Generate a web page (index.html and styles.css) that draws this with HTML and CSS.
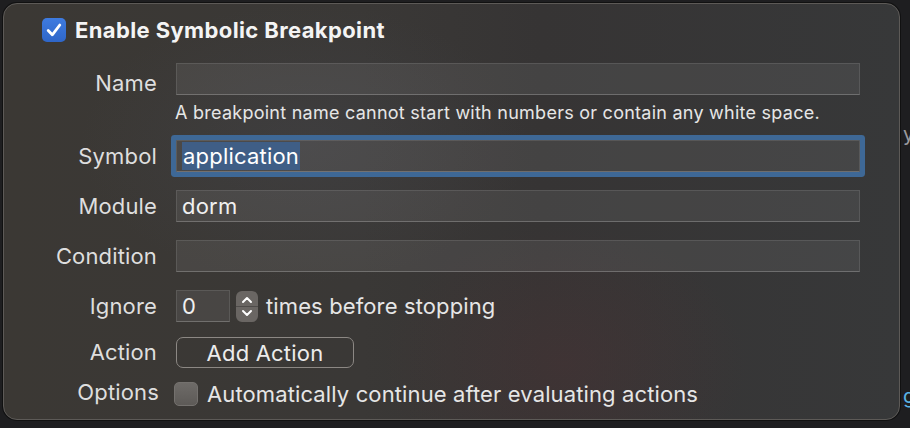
FILE: index.html
```html
<!DOCTYPE html>
<html>
<head>
<meta charset="utf-8">
<link rel="stylesheet" href="styles.css">
</head>
<body>
<div class="stage">
  <span class="frag frag-y">y</span>
  <span class="frag frag-g">g</span>
  <div class="panel">
    <div class="header">
      <span class="check on">
        <svg viewBox="0 0 24 24" width="24" height="24"><path d="M6.2 12.6 L10.3 16.8 L17.8 7" fill="none" stroke="#fff" stroke-width="2.8" stroke-linecap="round" stroke-linejoin="round"/></svg>
      </span>
      <span class="title">Enable Symbolic Breakpoint</span>
    </div>

    <div class="row r-name">
      <label class="lbl lbl-name">Name</label>
      <div class="field"></div>
    </div>
    <div class="row r-help">
      <span></span>
      <div class="help">A breakpoint name cannot start with numbers or contain any white space.</div>
    </div>
    <div class="row r-std">
      <label class="lbl">Symbol</label>
      <div class="field focus"><span class="sel">application</span></div>
    </div>
    <div class="row r-std">
      <label class="lbl">Module</label>
      <div class="field">dorm</div>
    </div>
    <div class="row r-std">
      <label class="lbl">Condition</label>
      <div class="field"></div>
    </div>
    <div class="row r-std">
      <label class="lbl">Ignore</label>
      <div class="ignore">
        <div class="field small">0</div>
        <div class="stepper">
          <svg viewBox="0 0 22 31" width="22" height="31">
            <path d="M7 11 L11 7 L15 11" fill="none" stroke="#fff" stroke-width="2" stroke-linecap="round" stroke-linejoin="round"/>
            <line x1="0" y1="15.5" x2="22" y2="15.5" stroke="rgba(0,0,0,0.25)" stroke-width="1"/>
            <path d="M7 20 L11 24 L15 20" fill="none" stroke="#fff" stroke-width="2" stroke-linecap="round" stroke-linejoin="round"/>
          </svg>
        </div>
        <span class="ctext">times before stopping</span>
      </div>
    </div>
    <div class="row r-action">
      <label class="lbl">Action</label>
      <div><button class="btn">Add Action</button></div>
    </div>
    <div class="row r-opt">
      <label class="lbl opt">Options</label>
      <div class="optline">
        <span class="check off"></span>
        <span class="ctext">Automatically continue after evaluating actions</span>
      </div>
    </div>
  </div>
</div>
</body>
</html>
```

FILE: styles.css
```css
html, body {
  margin: 0;
  padding: 0;
}
body {
  background: #1e1e20;
  font-family: Inter, "Noto Sans", "Liberation Sans", sans-serif;
  color: #e2e2e2;
}
.stage {
  position: relative;
  width: 910px;
  height: 428px;
  overflow: hidden;
  padding: 3px 0 0 3px;
  box-sizing: border-box;
}
.frag {
  position: absolute;
  font-size: 20px;
  line-height: 1;
}
.frag-y { left: 903px; top: 124px; color: #9a9a9e; }
.frag-g { left: 903px; top: 386px; color: #5ab4e6; }

.panel {
  width: 897px;
  height: 417px;
  box-sizing: border-box;
  border: 1px solid #5d5a57;
  border-radius: 14px;
  box-shadow: 0 0 0 1px #111;
  background:
    radial-gradient(ellipse 260px 200px at 560px 360px, rgba(80, 50, 52, 0.35), transparent 70%),
    radial-gradient(ellipse 320px 200px at 300px 140px, rgba(70, 72, 80, 0.35), transparent 70%),
    linear-gradient(90deg, #3b3834 0%, #3a3836 40%, #363434 60%, #373839 100%);
  padding-top: 14px;
}

.header {
  display: flex;
  align-items: center;
  height: 24px;
  padding-left: 38px;
}
.check {
  width: 24px;
  height: 24px;
  border-radius: 5px;
  box-sizing: border-box;
  flex: none;
  display: flex;
}
.check.on {
  background: linear-gradient(#3e7be0, #2f66c8);
}
.check.off {
  background: linear-gradient(#6e6b68, #5d5a57);
  border: 1px solid #74716e;
}
.title {
  margin-left: 9px;
  font-size: 22px;
  font-weight: 700;
  color: #f4f4f4;
  letter-spacing: 0.38px;
}

.row {
  display: grid;
  grid-template-columns: 153px 684px;
  column-gap: 19px;
  align-items: center;
}
.r-name { margin-top: 20px; height: 32px; }
.r-help { margin-top: 8px; height: 20px; }
.r-std { margin-top: 18px; height: 32px; }
.r-action { margin-top: 14px; height: 32px; }
.r-opt { margin-top: 12px; height: 28px; }

.lbl {
  text-align: right;
  font-size: 22px;
  letter-spacing: 0.15px;
  color: #dedede;
}
.lbl-name {
  margin-top: 8px;
}
.lbl.opt {
  margin-right: -2px;
  margin-top: -4px;
}
.field {
  height: 32px;
  box-sizing: border-box;
  background: rgba(255, 255, 255, 0.075);
  border: 1px solid rgba(255, 255, 255, 0.1);
  border-bottom-color: rgba(255, 255, 255, 0.22);
  font-size: 22px;
  letter-spacing: 0.2px;
  color: #f0f0f0;
  padding-left: 5px;
  display: flex;
  align-items: center;
}
.field.focus {
  box-shadow: 0 0 0 5px #3e6896;
  border-radius: 1px;
}
.sel {
  background: #3f5e86;
  color: #ffffff;
  padding: 0 1px;
  line-height: 28px;
}
.help {
  font-size: 18px;
  letter-spacing: 0.25px;
  color: #e6e6e6;
  margin-left: -1px;
  white-space: nowrap;
}
.ignore {
  display: flex;
  align-items: center;
}
.field.small {
  width: 54px;
  flex: none;
}
.stepper {
  width: 22px;
  height: 31px;
  margin-left: 6px;
  border-radius: 6px;
  background: #6a6663;
  display: flex;
}
.ctext {
  font-size: 22px;
  letter-spacing: 0.12px;
  color: #e6e6e6;
  margin-left: 8px;
  white-space: nowrap;
}
.btn {
  width: 178px;
  height: 31px;
  margin-top: 1px;
  box-sizing: border-box;
  border: 1.5px solid #8c8884;
  border-radius: 7px;
  background: transparent;
  font-family: inherit;
  font-size: 22px;
  letter-spacing: 0.2px;
  color: #ececec;
  padding: 0;
}
.optline {
  display: flex;
  align-items: center;
  margin-left: -2px;
}
.optline .ctext {
  margin-left: 9px;
}
```
